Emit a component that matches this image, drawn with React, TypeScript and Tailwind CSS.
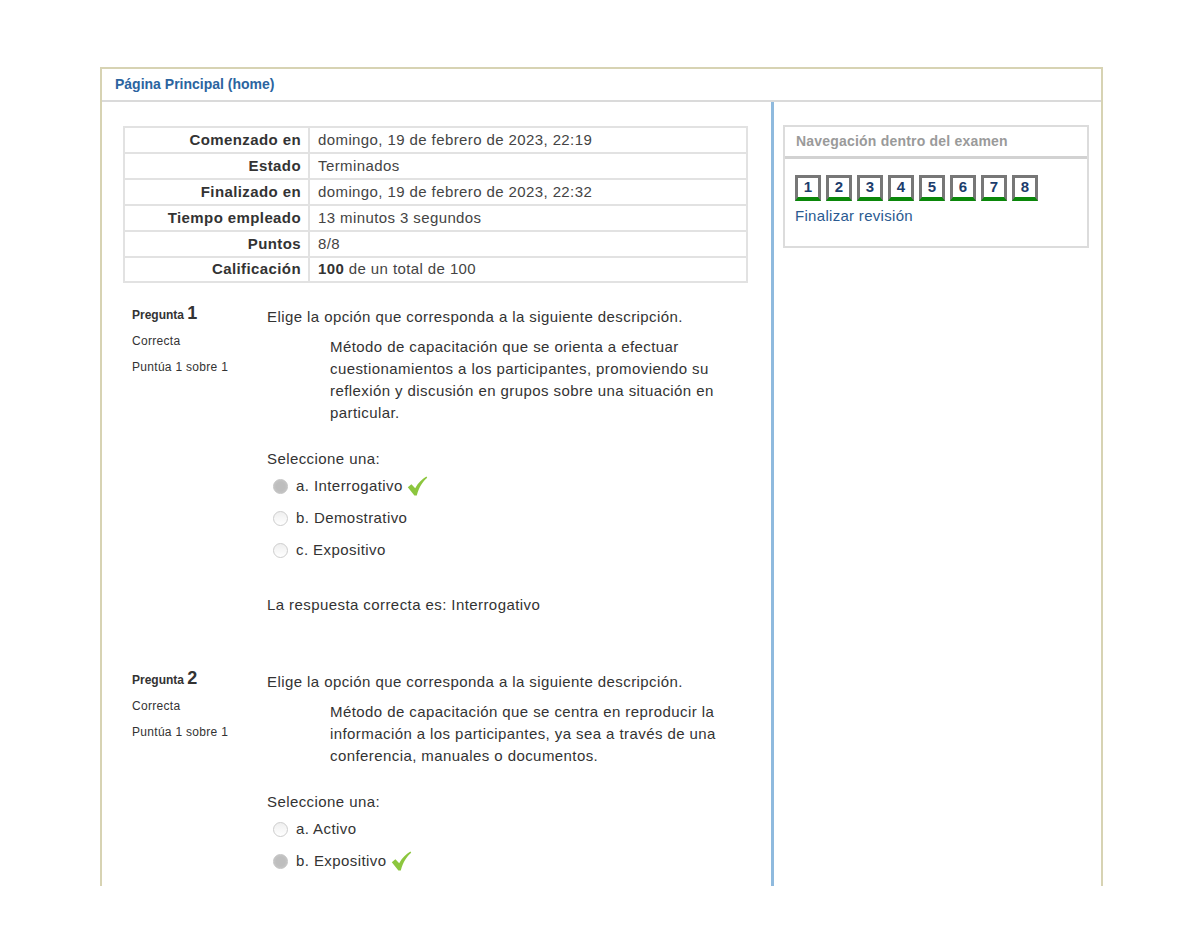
const summary = [
  { label: "Comenzado en", value: "domingo, 19 de febrero de 2023, 22:19" },
  { label: "Estado", value: "Terminados" },
  { label: "Finalizado en", value: "domingo, 19 de febrero de 2023, 22:32" },
  { label: "Tiempo empleado", value: "13 minutos 3 segundos" },
  { label: "Puntos", value: "8/8" },
];

type Question = {
  num: number;
  desc: string;
  options: { text: string; checked: boolean }[];
  answer?: string;
};

const questions: Question[] = [
  {
    num: 1,
    desc: "Método de capacitación que se orienta a efectuar cuestionamientos a los participantes, promoviendo su reflexión y discusión en grupos sobre una situación en particular.",
    options: [
      { text: "a. Interrogativo", checked: true },
      { text: "b. Demostrativo", checked: false },
      { text: "c. Expositivo", checked: false },
    ],
    answer: "La respuesta correcta es: Interrogativo",
  },
  {
    num: 2,
    desc: "Método de capacitación que se centra en reproducir la información a los participantes, ya sea a través de una conferencia, manuales o documentos.",
    options: [
      { text: "a. Activo", checked: false },
      { text: "b. Expositivo", checked: true },
    ],
  },
];

function Check() {
  return (
    <svg width="21" height="20" viewBox="0 0 21 20" className="ml-[4px]">
      <path
        d="M0.8 11.2 L4.4 8.2 L8.2 12.2 C11 7.2 14.8 3.2 19.4 0.6 L20.2 1.8 C15.6 5.8 12 11.5 9.8 19.4 L7.4 19.4 Z"
        fill="#8cc63e"
      />
    </svg>
  );
}

function Radio({ checked }: { checked: boolean }) {
  return checked ? (
    <span className="inline-block h-[15px] w-[15px] rounded-full border border-[#c2c2c2] bg-[radial-gradient(circle,#bebebe_50%,#d0d0d0_100%)]" />
  ) : (
    <span className="inline-block h-[15px] w-[15px] rounded-full border-[1.5px] border-[#cdcdcd] bg-[linear-gradient(#efefef,#ffffff)]" />
  );
}

function QuestionBlock({ q }: { q: Question }) {
  return (
    <div className="flex pl-[30px]">
      <div className="w-[135px] shrink-0 text-[12px] leading-[26px] tracking-[0.3px] text-[#333]">
        <div className="font-bold tracking-normal">
          Pregunta <span className="text-[18px]">{q.num}</span>
        </div>
        <div>Correcta</div>
        <div>Puntúa 1 sobre 1</div>
      </div>
      <div className="pt-[4px] text-[15px] tracking-[0.42px] text-[#333]">
        <div className="leading-[26px]">
          Elige la opción que corresponda a la siguiente descripción.
        </div>
        <div className="ml-[63px] mt-[6px] w-[395px] leading-[22px]">{q.desc}</div>
        <div className="mt-[24px] leading-[22px]">Seleccione una:</div>
        <div>
          {q.options.map((o) => (
            <div key={o.text} className="flex h-[32px] items-center pl-[6px]">
              <Radio checked={o.checked} />
              <span className="ml-[8px]">{o.text}</span>
              {o.checked ? <Check /> : null}
            </div>
          ))}
        </div>
        {q.answer ? (
          <div className="mt-[28px] leading-[22px]">{q.answer}</div>
        ) : null}
      </div>
    </div>
  );
}

export default function App() {
  return (
    <div className="min-h-[927px] bg-white pt-[67px] font-['Liberation_Sans',Arial,sans-serif]">
      <div className="ml-[100px] flex h-[819px] w-[1003px] flex-col border-x-2 border-t-2 border-[#d7d3b3]">
        <div className="flex h-[33px] shrink-0 items-center border-b-2 border-[#dadada] pl-[13px] text-[14px] font-bold text-[#2b64a0]">
          Página Principal (home)
        </div>

        <div className="flex flex-1">
          <div className="w-[669px] shrink-0 pt-[24px]">
            <table className="ml-[21px] w-[625px] border-collapse border-2 border-[#e2e2e2] text-[15px] tracking-[0.4px] text-[#333]">
              <tbody>
                {summary.map((r) => (
                  <tr key={r.label} className="h-[26px]">
                    <td className="w-[185px] border-2 border-[#e2e2e2] pr-[7px] text-right font-bold">
                      {r.label}
                    </td>
                    <td className="border-2 border-[#e2e2e2] pl-[8px] text-[#444]">
                      {r.value}
                    </td>
                  </tr>
                ))}
                <tr className="h-[25px]">
                  <td className="w-[185px] border-2 border-[#e2e2e2] pr-[7px] text-right font-bold">
                    Calificación
                  </td>
                  <td className="border-2 border-[#e2e2e2] pl-[8px] text-[#444]">
                    <b className="text-[#333]">100</b> de un total de 100
                  </td>
                </tr>
              </tbody>
            </table>

            <div className="mt-[17px]">
              <QuestionBlock q={questions[0]!} />
            </div>
            <div className="mt-[49px]">
              <QuestionBlock q={questions[1]!} />
            </div>
          </div>

          <div className="w-[3px] shrink-0 bg-[#8fbade]" />

          <div className="flex-1 pl-[9px] pr-[12px] pt-[23px]">
            <div className="border-2 border-[#dcdcdc]">
              <div className="flex h-[32px] items-center border-b-[3px] border-[#d2d2d2] pl-[11px] text-[14px] font-bold tracking-[0.2px] text-[#9a9a9a]">
                Navegación dentro del examen
              </div>
              <div className="px-[10px] pb-[19px] pt-[16px]">
                <div className="flex gap-[5px]">
                  {[1, 2, 3, 4, 5, 6, 7, 8].map((n) => (
                    <div
                      key={n}
                      className="flex h-[26px] w-[26px] items-center justify-center border-x-[3px] border-t-[3px] border-b-[4px] border-x-[#777] border-t-[#777] border-b-[#0a870a] bg-white text-[15px] font-bold text-[#1c3d6c]"
                    >
                      {n}
                    </div>
                  ))}
                </div>
                <div className="mt-[4px] text-[15px] leading-[22px] tracking-[0.3px] text-[#2a5a91]">
                  Finalizar revisión
                </div>
              </div>
            </div>
          </div>
        </div>
      </div>
    </div>
  );
}
